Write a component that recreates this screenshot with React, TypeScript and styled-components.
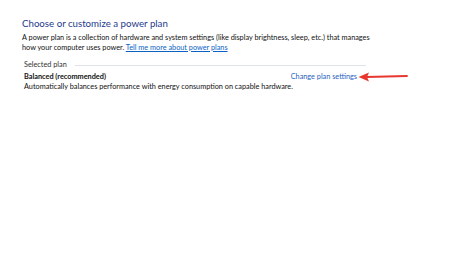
import styled, { createGlobalStyle } from 'styled-components';

const GlobalStyle = createGlobalStyle`
    html, body {
        margin: 0;
        padding: 0;
        background: #ffffff;
    }
    body {
        width: 474px;
        height: 266px;
        overflow: hidden;
        font-family: Lato, 'Noto Sans', sans-serif;
    }
`;

const Page = styled.div`
    width: 474px;
    height: 266px;
    box-sizing: border-box;
    padding: 16px 22px 0 22px;
    background: #fff;
`;

const Title = styled.h1`
    margin: 0;
    font-size: 9.7px;
    font-weight: 400;
    line-height: 15px;
    color: #1e3a8c;
`;

const Intro = styled.p`
    margin: 2px 0 0 0;
    width: 362px;
    font-size: 7.3px;
    line-height: 9.5px;
    color: #111;
`;

const MoreLink = styled.a`
    color: #0b62c4;
    text-decoration: underline;
`;

const Section = styled.div`
    margin: 8px 0 0 2px;
    width: 342px;
`;

const SectionHead = styled.div`
    display: flex;
    align-items: center;
    gap: 8px;
    font-size: 7.3px;
    line-height: 10px;
    color: #333;
`;

const Rule = styled.div`
    flex: 1;
    height: 1px;
    background: #dde3e8;
`;

const PlanRow = styled.div`
    margin-top: 2px;
    display: grid;
    grid-template-columns: 1fr auto;
    font-size: 7.3px;
    line-height: 10px;
`;

const PlanName = styled.div`
    font-weight: 700;
    color: #111;
`;

const PlanDesc = styled.div`
    grid-column: 1 / -1;
    color: #111;
    white-space: nowrap;
`;

const LinkWrap = styled.div`
    position: relative;
    margin-right: 9px;
`;

const SettingsLink = styled.a`
    display: block;
    color: #1f5fbf;
    text-decoration: none;
    white-space: nowrap;
`;

const Arrow = styled.svg`
    position: absolute;
    left: calc(100% + 1px);
    top: -1px;
`;

export default function App() {
    return (
        <>
            <GlobalStyle />
            <Page>
                <Title>Choose or customize a power plan</Title>
                <Intro>
                    A power plan is a collection of hardware and system settings (like display brightness, sleep, etc.) that manages
                    how your computer uses power. <MoreLink href="#">Tell me more about power plans</MoreLink>
                </Intro>
                <Section>
                    <SectionHead>
                        <span>Selected plan</span>
                        <Rule />
                    </SectionHead>
                    <PlanRow>
                        <PlanName>Balanced (recommended)</PlanName>
                        <LinkWrap>
                            <SettingsLink href="#">Change plan settings</SettingsLink>
                            <Arrow width="50" height="12" viewBox="0 0 50 12">
                                <line x1="8" y1="6" x2="49" y2="5" stroke="#e8372f" strokeWidth="1.8" strokeLinecap="round" />
                                <path d="M0.5 6 L11 1.5 L9 6 L11 10.5 Z" fill="#e8372f" />
                            </Arrow>
                        </LinkWrap>
                        <PlanDesc>Automatically balances performance with energy consumption on capable hardware.</PlanDesc>
                    </PlanRow>
                </Section>
            </Page>
        </>
    );
}
